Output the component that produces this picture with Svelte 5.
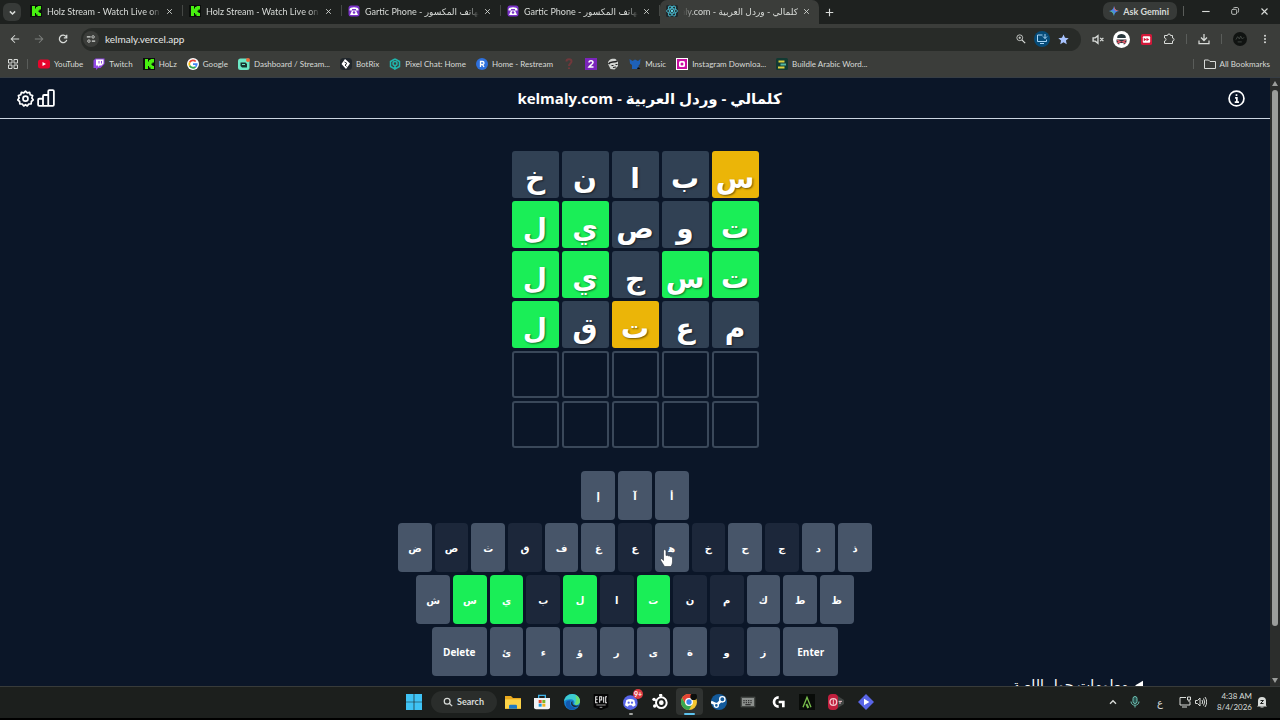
<script lang="ts">
	const tabs = [
		{ title: 'Holz Stream - Watch Live on Ki', icon: 'kick' },
		{ title: 'Holz Stream - Watch Live on Ki', icon: 'kick' },
		{ title: 'Gartic Phone - لعبة الهاتف المكسور', icon: 'gartic' },
		{ title: 'Gartic Phone - لعبة الهاتف المكسور', icon: 'gartic' },
		{ title: 'كلمالي - وردل العربية - kelmaly.com', icon: 'react', active: true }
	];

	const bookmarks = [
		{ label: 'YouTube', icon: 'youtube' },
		{ label: 'Twitch', icon: 'twitch' },
		{ label: 'HoLz', icon: 'kick' },
		{ label: 'Google', icon: 'google' },
		{ label: 'Dashboard / Stream...', icon: 'dashboard' },
		{ label: 'BotRix', icon: 'botrix' },
		{ label: 'Pixel Chat: Home', icon: 'pixel' },
		{ label: 'Home - Restream', icon: 'restream' },
		{ label: '', icon: 'question' },
		{ label: '', icon: 'two' },
		{ label: '', icon: 'face' },
		{ label: 'Music', icon: 'music' },
		{ label: 'Instagram Downloa...', icon: 'insta' },
		{ label: 'Buildle Arabic Word...', icon: 'buildle' }
	];

	// c = correct, p = present, a = absent, e = empty
	const guesses = [
		{ word: 'سبانخ', marks: 'paaaa' },
		{ word: 'توصيل', marks: 'caacc' },
		{ word: 'تسجيل', marks: 'ccacc' },
		{ word: 'معتقل', marks: 'aapac' },
		{ word: '     ', marks: 'eeeee' },
		{ word: '     ', marks: 'eeeee' }
	];

	const keyRows = [
		['إ', 'آ', 'أ'],
		['ض', 'ص', 'ث', 'ق', 'ف', 'غ', 'ع', 'ه', 'خ', 'ح', 'ج', 'د', 'ذ'],
		['ش', 'س', 'ي', 'ب', 'ل', 'ا', 'ت', 'ن', 'م', 'ك', 'ط', 'ظ'],
		['Delete', 'ئ', 'ء', 'ؤ', 'ر', 'ى', 'ة', 'و', 'ز', 'Enter']
	];
	const correct = 'سيلت';
	const absent = 'صقعخجبانمو';

	const apps = ['explorer', 'store', 'edge', 'epic', 'discord', 'steelseries', 'chrome', 'steam', 'keyboard', 'logitech', 'alpha', 'recorder', 'clip'];
</script>

{#snippet icon(name: string, size = 12)}
	<svg class="icon" width={size} height={size} viewBox="0 0 24 24" fill="none" stroke="currentColor" stroke-width="2" aria-hidden="true">
		{#if name === 'kick'}
			<rect width="24" height="24" fill="#0b0e0c" stroke="none" />
			<path d="M4 2h6v5h2V4h3V2h7v7h-3v2h-2v3h2v2h3v6h-7v-3h-3v-3h-2v6H4z" fill="#48f010" stroke="none" />
		{:else if name === 'gartic'}
			<rect x="1" y="1" width="22" height="22" rx="5" fill="#7a32c7" stroke="none" />
			<path d="M3 9c0-6 18-6 18 0v2h-5V8H8v3H3zM8 11h8l4 9H4z" fill="#fff" stroke="none" />
			<circle cx="12" cy="15" r="2.5" fill="#7a32c7" stroke="none" />
		{:else if name === 'react'}
			<rect width="24" height="24" rx="3" fill="#20292c" stroke="none" />
			<g stroke="#48b5c9" stroke-width="1.8">
				<ellipse cx="12" cy="12" rx="11" ry="4.5" />
				<ellipse cx="12" cy="12" rx="11" ry="4.5" transform="rotate(60 12 12)" />
				<ellipse cx="12" cy="12" rx="11" ry="4.5" transform="rotate(120 12 12)" />
			</g>
			<circle cx="12" cy="12" r="2.3" fill="#63dbec" stroke="none" />
		{:else if name === 'youtube'}
			<rect y="3" width="24" height="18" rx="5" fill="#e8052c" stroke="none" />
			<path d="m9 8 7 4-7 4z" fill="#fff" stroke="none" />
		{:else if name === 'twitch'}
			<path d="M5 1 1 5v15h5v4l4-4h5l8-8V1z" fill="#9147e5" stroke="none" />
			<path d="M6 3h15v8l-4 4h-4l-3 3v-3H6z" fill="#fff" stroke="none" />
			<path d="M12 6v5m5-5v5" stroke="#9147e5" />
		{:else if name === 'google'}
			<circle cx="12" cy="12" r="12" fill="#fff" stroke="none" />
			<g stroke-width="3.5">
				<path d="M17.5 7A7.5 7.5 0 0 0 5.4 8.5" stroke="#ea4335" />
				<path d="M5.4 8.5a7.5 7.5 0 0 0 0 7" stroke="#fbbc05" />
				<path d="M5.4 15.5A7.5 7.5 0 0 0 17 17.6" stroke="#34a853" />
				<path d="M17 17.6a7.5 7.5 0 0 0 2.5-5.4H12" stroke="#4285f4" />
			</g>
		{:else if name === 'dashboard'}
			<rect y="1" width="23" height="23" rx="5" fill="#6ce8c5" stroke="none" />
			<path d="M5 9h10l3 3v7H8l-3-3z" fill="#17342f" stroke="none" />
			<path d="M8 13h6" stroke="#6ce8c5" />
			<circle cx="20" cy="4" r="4" fill="#e46a3b" stroke="none" />
		{:else if name === 'botrix'}
			<rect width="24" height="24" rx="7" fill="#20262b" stroke="none" />
			<path d="m10 2 10 9-8 11L3 12z" fill="#fff" stroke="none" />
			<path d="m9 8 5 3-4 3 3 3" stroke="#20262b" />
		{:else if name === 'pixel'}
			<path d="m12 2 9 5v10l-9 5v-8M12 22l-9-5V7l9-5" stroke="#20b5ac" stroke-width="3" />
			<circle cx="12" cy="11" r="4" stroke="#20b5ac" stroke-width="3" />
		{:else if name === 'restream'}
			<circle cx="12" cy="12" r="12" fill="#2e70dc" stroke="none" />
			<path d="M9 18V7h4a3 3 0 0 1 0 6H9m4 0 3 5" stroke="#fff" stroke-width="2.6" />
		{:else if name === 'question'}
			<path d="M7 7c0-6 10-6 10 0 0 4-5 4-5 9m0 3v3" stroke="#70383b" stroke-width="4" />
		{:else if name === 'two'}
			<rect width="24" height="24" fill="#7b25bb" stroke="none" />
			<path d="M8 9c0-5 8-5 8 0 0 3-5 5-8 9h9" stroke="#fff" stroke-width="3" />
		{:else if name === 'face'}
			<path d="M2 12C1 4 9 0 17 2l5 5v9l-7 7-8-1z" fill="#d0d3d0" stroke="none" />
			<path d="M3 12c4-6 10-2 18-6" stroke="#222" stroke-width="3" />
			<path d="M9 15h4m4-2h4M12 19l6-1" stroke="#222" />
		{:else if name === 'music'}
			<path d="m1 2 6 4 5-3 6 3 5-4-1 10-3 3 1 7H6V14l-4-3z" fill="#1e61b8" stroke="none" />
			<path d="m18 18 5 4h-7z" fill="#080b10" stroke="none" />
		{:else if name === 'insta'}
			<rect x="1" y="1" width="22" height="22" fill="#c910a3" stroke="#fff" />
			<rect x="6" y="6" width="12" height="12" rx="3" fill="#fff" stroke="none" />
			<circle cx="12" cy="12" r="3" fill="#c910a3" stroke="none" />
		{:else if name === 'buildle'}
			<rect width="24" height="24" rx="3" fill="#123a32" stroke="none" />
			<path d="M5 5h12v4H5z" fill="#ddd23e" stroke="none" />
			<path d="M9 11h11v4H9z" fill="#53b8a2" stroke="none" />
			<path d="M4 17h13v4H4z" fill="#ddd23e" stroke="none" />
		{:else if name === 'close'}
			<path d="m4 4 16 16M20 4 4 20" stroke-width="3" />
		{:else if name === 'plus'}
			<path d="M12 2v20M2 12h20" stroke-width="3" />
		{:else if name === 'down'}
			<path d="m5 9 7 7 7-7" stroke-width="4" />
		{:else if name === 'up'}
			<path d="m3 17 9-9 9 9" stroke-width="4" />
		{:else if name === 'minimize'}
			<path d="M3 12h20" stroke-width="3" />
		{:else if name === 'restore'}
			<rect x="4" y="8" width="12" height="12" rx="3" />
			<path d="M8 5c1-2 12-2 12 0 1 1 1 10-1 11" />
		{:else if name === 'gemini'}
			<path d="M12 0c1 7 5 11 12 12-7 1-11 5-12 12-1-7-5-11-12-12C7 11 11 7 12 0z" fill="#4d86e8" stroke="none" />
			<path d="M12 0c1 7 5 11 12 12H12z" fill="#ec6a62" stroke="none" />
			<path d="M0 12h12v12C11 17 7 13 0 12z" fill="#51b98a" stroke="none" />
			<circle cx="12" cy="12" r="4" fill="#4d86e8" stroke="none" />
		{:else if name === 'back'}
			<path d="M22 12H3m9-9-9 9 9 9" stroke-width="2.5" />
		{:else if name === 'forward'}
			<path d="M2 12h19m-9-9 9 9-9 9" stroke-width="2.5" />
		{:else if name === 'reload'}
			<path d="M20 7a9 9 0 1 0 1 7M21 2v7h-7" stroke-width="3" />
		{:else if name === 'tune'}
			<path d="M2 7h9M14 17h8" stroke-width="3" />
			<circle cx="17" cy="7" r="3" />
			<circle cx="7" cy="17" r="3" />
		{:else if name === 'zoom'}
			<circle cx="9" cy="9" r="7" />
			<path d="m14 14 8 8" stroke-width="3" />
			<path d="M6 9h6M9 6v6" />
		{:else if name === 'install'}
			<path d="M13 4H3v13h18v-4M8 21h8M18 2v9m-4-4 4 4 4-4" />
		{:else if name === 'star'}
			<path d="m12 1 3.3 7.3 8 .8-6 5.2 1.8 8L12 18l-7.1 4.3 1.8-8-6-5.2 8-.8z" fill="#a9c4ff" stroke="none" />
		{:else if name === 'mute'}
			<path d="M2 9v6h4l5 4V5L6 9zM15 9l6 6m0-6-6 6" stroke-width="2.5" />
		{:else if name === 'panda'}
			<circle cx="12" cy="12" r="12" fill="#fff" stroke="none" />
			<path d="M6 8c1-5 11-5 12 0v2H6zM5 12h14v4l-3 3H8l-3-3z" fill="#29383d" stroke="none" />
			<path d="m6 13 4 2-4 2m12-4-4 2 4 2" stroke="#df5969" />
			<path d="M9 17h6v3H9z" fill="#fff" stroke="none" />
		{:else if name === 'ff'}
			<rect width="24" height="24" rx="4" fill="#d31839" stroke="none" />
			<rect x="4" y="5" width="16" height="14" rx="2" fill="#fff" stroke="none" />
			<path d="m6 8 6 4-6 4zm6 0 6 4-6 4z" fill="#d31839" stroke="none" />
		{:else if name === 'puzzle'}
			<path d="M3 5h6a3 3 0 0 1 6 0h4v5a3 3 0 0 1 0 6v5H3v-5a3 3 0 0 0 0-6z" />
		{:else if name === 'download'}
			<path d="M12 2v13m-6-6 6 6 6-6M2 15v6h20v-6" stroke-width="2.5" />
		{:else if name === 'profile'}
			<circle cx="12" cy="12" r="12" fill="#101311" stroke="none" />
			<path d="m5 13 3-5 3 4 2-5 3 5 3-3M8 17h7" stroke="#454a46" stroke-width="1.5" />
		{:else if name === 'dots'}
			<g fill="currentColor" stroke="none"><circle cx="12" cy="4" r="2.4" /><circle cx="12" cy="12" r="2.4" /><circle cx="12" cy="20" r="2.4" /></g>
		{:else if name === 'apps'}
			<path d="M3 3h7v7H3zM14 3h7v7h-7zM3 14h7v7H3zM14 14h7v7h-7z" />
		{:else if name === 'folder'}
			<path d="M1 4h8l3 3h11v14H1z" />
		{:else if name === 'gear'}
			<path d="M9.6 4 12 1.5 14.4 4 17.8 3.3 18.7 6.6 22 7.8 21 11.2 23 14 20.3 16.2 20 19.6 16.6 19.8 14.5 22.5 12 20.8 9.5 22.5 7.4 19.8 4 19.6 3.7 16.2 1 14 3 11.2 2 7.8 5.3 6.6 6.2 3.3z" stroke-width="2.4" stroke-linejoin="round" />
			<circle cx="12" cy="12.2" r="3.5" stroke-width="2.4" />
		{:else if name === 'stats'}
			<path d="M1.5 14.5q0-1.5 1.5-1.5h5v9.5H3q-1.5 0-1.5-1.5zM8 9.5Q8 8 9.500 8H15v14.500H8zM15 3q0-1.5 1.5-1.5H21q1.5 0 1.5 1.5v18q0 1.5-1.5 1.5h-6z" stroke-width="2.4" />
		{:else if name === 'info'}
			<circle cx="12" cy="12" r="10.5" stroke-width="2.4" />
			<path d="M10 11h2.5v6M9.5 17h6M12 6v2.5" stroke-width="2.4" />
		{:else if name === 'windows'}
			<path d="M0 0h11.5v11.5H0zM12.5 0H24v11.500H12.500zM0 12.500h11.500V24H0zM12.500 12.500H24V24H12.500z" fill="#3fc3f5" stroke="none" />
		{:else if name === 'search'}
			<circle cx="10" cy="10" r="7" stroke-width="3" />
			<path d="m15 15 7 7" stroke-width="3" />
		{:else if name === 'explorer'}
			<path d="M0 3h9l3 3h12v16H0z" fill="#e9a91e" stroke="none" />
			<path d="M0 8h24v14H0z" fill="#fbd348" stroke="none" />
			<path d="M6 22v-4q0-2 2-2h8q2 0 2 2v4z" fill="#1d7ac5" stroke="none" />
		{:else if name === 'store'}
			<path d="M7 6V2h10v4" stroke="#3fb3e9" />
			<path d="M0 6h24v14q0 3-3 3H3q-3 0-3-3z" fill="#f2f3f5" stroke="none" />
			<path d="M7 9h4.500v4.500H7z" fill="#e74b2c" stroke="none" />
			<path d="M12.500 9H17v4.500h-4.500z" fill="#79b52a" stroke="none" />
			<path d="M7 14.500h4.500V19H7z" fill="#1b9be0" stroke="none" />
			<path d="M12.500 14.500H17V19h-4.500z" fill="#f1b51d" stroke="none" />
		{:else if name === 'edge'}
			<circle cx="12" cy="12" r="12" fill="#1680d1" stroke="none" />
			<path d="M0 11C2-3 22-4 24 10c0 6-5 8-9 5 2-4-1-8-6-7-4 0-7 1-9 3z" fill="#3ccbd0" stroke="none" />
			<path d="M17 2c5 2 7 5 7 9 0 4-4 6-8 5 3-5 3-9 1-14z" fill="#6bdc70" stroke="none" />
			<path d="M10 10c-3 5 1 11 10 10-7 7-19 3-17-7 1-3 4-4 7-3z" fill="#1259ae" stroke="none" />
			<path d="M13 11c-2 5 3 8 9 6 0 3-9 4-11-1-1-3 0-5 2-5z" fill="#1c2a35" stroke="none" />
		{:else if name === 'epic'}
			<path d="M1 0h22v20l-11 4-11-4z" fill="#050505" stroke="none" />
			<path d="M7 4H4v9h3M4 8h3m3 5V4h3v5h-3m6-5v9m5-9h-2v9h2" stroke="#e8e8e8" stroke-width="1.6" />
			<path d="M5 16.5h14m-9 3.500h4" stroke="#a7a7a7" stroke-width="1.4" />
		{:else if name === 'discord'}
			<circle cx="11" cy="13" r="11" fill="#5865e8" stroke="none" />
			<path d="M5 9q6-3 12 0l2 8-4 2-2-2H9l-2 2-4-2z" fill="#fff" stroke="none" />
			<g fill="#5865e8" stroke="none"><circle cx="8.5" cy="13" r="1.7" /><circle cx="13.5" cy="13" r="1.7" /></g>
		{:else if name === 'steelseries'}
			<circle cx="14" cy="13" r="8" stroke="#fff" stroke-width="3" />
			<circle cx="14" cy="13" r="2.5" fill="#fff" stroke="#fff" />
			<g fill="#fff" stroke="none"><circle cx="3" cy="8" r="2.5" /><circle cx="13" cy="2" r="2.5" /><circle cx="4" cy="18" r="2.5" /></g>
			<path d="m3 8 4 3M4 18l4-2M13 2v4" stroke="#fff" />
		{:else if name === 'chrome'}
			<circle cx="12" cy="12" r="12" fill="#f5c62f" stroke="none" />
			<path d="M1.600 6A12 12 0 0 1 22.400 6H12z" fill="#e44336" stroke="none" />
			<path d="M1.600 6A12 12 0 0 0 12 24l5-9H7z" fill="#39a852" stroke="none" />
			<path d="M2 6 7 15l5-9z" fill="#e44336" stroke="none" />
			<circle cx="12" cy="12" r="5" fill="#3b83ec" stroke="#fff" />
			<circle cx="19" cy="4" r="5" fill="#0c0f0d" stroke="none" />
		{:else if name === 'steam'}
			<circle cx="12" cy="12" r="12" fill="#135a9b" stroke="none" />
			<path d="M0 12 9 16l8-8" stroke="#fff" stroke-width="4" />
			<circle cx="17" cy="8" r="4" fill="#135a9b" stroke="#fff" />
			<circle cx="8" cy="17" r="3" fill="#135a9b" stroke="#fff" />
		{:else if name === 'keyboard'}
			<rect x="2" y="5" width="20" height="14" fill="#8d918e" stroke="#454946" />
			<path d="M5 10h14M5 13h14" stroke="#333" stroke-dasharray="2 1.5" />
			<path d="M8 16h8" stroke="#333" />
		{:else if name === 'logitech'}
			<path d="M13 5a7 7 0 1 0 0 14M13 12h7v8" stroke="#fff" stroke-width="4" />
		{:else if name === 'alpha'}
			<rect width="24" height="24" fill="#080b08" stroke="none" />
			<path d="m6 20 6-15 6 15" stroke="#78bd4c" />
			<path d="m11 15 3 6" stroke="#78bd4c" stroke-width="3" />
		{:else if name === 'recorder'}
			<path d="m10 0 14 9v6l-14 9z" fill="#414543" stroke="none" />
			<rect width="15" height="24" rx="6" fill="#c21f3e" stroke="none" />
			<circle cx="8" cy="12" r="5" stroke="#f2c8ce" />
			<path d="M8 8v8M16 11h5m-3 0v4" stroke="#f2c8ce" stroke-width="1.5" />
		{:else if name === 'clip'}
			<path d="m12 0 12 12-12 12L0 12z" fill="#5965e7" stroke="none" />
			<path d="m9 7 8 5-8 5z" fill="#fff" stroke="none" />
		{:else if name === 'mic'}
			<rect x="8" y="1" width="8" height="14" rx="4" fill="#29534f" />
			<path d="M4 11c0 10 16 10 16 0M12 19v4" />
		{:else if name === 'network'}
			<path d="M14 3H2v15h20V11M6 22h10M17 2h6v6h-6zM20 8v4" />
		{:else if name === 'speaker'}
			<path d="M1 9v6h4l5 5V4L5 9zM14 8q3 4 0 8M17 5q5 7 0 14M20 2q7 10 0 20" />
		{:else if name === 'bell'}
			<path d="M4 19V10a8 8 0 0 1 16 0v9l2 2H2z" fill="currentColor" stroke="none" />
			<path d="M9 22h6" />
			<path d="M9 9h6l-6 6h6" stroke="#1c1f1d" />
		{/if}
	</svg>
{/snippet}

<div class="desktop">
	<div class="tab-strip">
		<button class="tab-search" aria-label="Search tabs">{@render icon('down', 9)}</button>
		{#each tabs as tab}
			<div class="tab" class:active={tab.active}>
				{@render icon(tab.icon, 12)}
				<span class="tab-title" dir={tab.active ? 'rtl' : 'ltr'}>{tab.title}</span>
				<button class="plain" aria-label="Close tab">{@render icon('close', 7)}</button>
			</div>
		{/each}
		<button class="plain new-tab" aria-label="New tab">{@render icon('plus', 9)}</button>
		<div class="window-controls">
			<button class="gemini">{@render icon('gemini', 10)}Ask Gemini</button>
			<span class="divider"></span>
			<button class="plain" aria-label="Minimize">{@render icon('minimize', 9)}</button>
			<button class="plain" aria-label="Restore">{@render icon('restore', 10)}</button>
			<button class="plain" aria-label="Close">{@render icon('close', 9)}</button>
		</div>
	</div>

	<div class="toolbar">
		<div class="nav">
			<button class="plain" aria-label="Back">{@render icon('back', 10)}</button>
			<button class="plain dim" aria-label="Forward">{@render icon('forward', 10)}</button>
			<button class="plain" aria-label="Reload">{@render icon('reload', 10)}</button>
		</div>
		<div class="address">
			<button class="site-info" aria-label="Site information">{@render icon('tune', 10)}</button>
			<input aria-label="Address" value="kelmaly.vercel.app" />
			<button class="plain" aria-label="Zoom">{@render icon('zoom', 10)}</button>
			<button class="install" aria-label="Install app">{@render icon('install', 12)}</button>
			<button class="plain" aria-label="Bookmark">{@render icon('star', 11)}</button>
		</div>
		<div class="extensions">
			<button class="mute" aria-label="Mute">{@render icon('mute', 13)}</button>
			<button class="plain" aria-label="Extension">{@render icon('panda', 17)}</button>
			<button class="plain" aria-label="Fast forward">{@render icon('ff', 11)}</button>
			<button class="plain" aria-label="Extensions">{@render icon('puzzle', 12)}</button>
			<span class="divider"></span>
			<button class="plain" aria-label="Downloads">{@render icon('download', 12)}</button>
			<span class="divider"></span>
			<button class="profile" aria-label="Profile">{@render icon('profile', 14)}</button>
			<button class="plain" aria-label="Menu">{@render icon('dots', 10)}</button>
		</div>
	</div>

	<nav class="bookmarks">
		<button class="plain" aria-label="Apps">{@render icon('apps', 12)}</button>
		<span class="divider"></span>
		{#each bookmarks as mark}
			<a href="#top" aria-label={mark.label || mark.icon}>{@render icon(mark.icon, 12)}{#if mark.label}<span>{mark.label}</span>{/if}</a>
		{/each}
		<span class="divider push"></span>
		<a href="#all">{@render icon('folder', 12)}<span>All Bookmarks</span></a>
	</nav>

	<div class="viewport">
		<main class="page">
			<header class="game-header">
				<button class="plain" aria-label="Settings">{@render icon('gear', 17)}</button>
				<button class="plain" aria-label="Statistics">{@render icon('stats', 18)}</button>
				<h1 dir="rtl">كلمالي - وردل العربية - kelmaly.com</h1>
				<button class="plain" aria-label="Info">{@render icon('info', 17)}</button>
			</header>

			<div class="board" dir="rtl">
				{#each guesses as guess}
					{#each guess.word.split('') as letter, i}
						<div class="tile {guess.marks[i]}">{letter.trim()}</div>
					{/each}
				{/each}
			</div>

			<div class="keyboard">
				{#each keyRows as row}
					<div class="key-row">
						{#each row as key}
							<button class="key" class:wide={key.length > 1} class:correct={correct.includes(key)} class:absent={absent.includes(key)}>
								{#if key === 'ه'}
									<!-- the joiner gives heh its initial form -->
									ه&zwj;
									<svg class="pointer" width="13" height="18" viewBox="0 0 13 18" aria-hidden="true">
										<path d="M3.5 10V2q0-1.5 1.2-1.5T6 2v4.500q2-.8 2.300.5 2-.6 2.300.7 1.900-.5 1.900 1.300v4q0 2-1.500 4.500H4.500L.8 11.500q-.8-1.500.5-1.800.9 0 2.200 1.800z" fill="#fff" stroke="#28303c" stroke-width=".6" />
									</svg>
								{:else}
									{key}
								{/if}
							</button>
						{/each}
					</div>
				{/each}
			</div>

			<details dir="rtl">
				<summary>معلومات حول اللعبة</summary>
			</details>
		</main>
		<div class="scrollbar">
			<span class="arrow"></span>
			<span class="thumb"></span>
			<span class="arrow flip"></span>
		</div>
	</div>

	<footer class="taskbar">
		<div class="dock">
			<button class="plain" aria-label="Start">{@render icon('windows', 16)}</button>
			<button class="search">{@render icon('search', 10)}Search</button>
			<div class="apps">
				{#each apps as app}
					<button class="app" class:current={app === 'chrome'} class:running={app === 'discord'} aria-label={app}>
						{@render icon(app, 16)}
						{#if app === 'discord'}<span class="badge">9+</span>{/if}
					</button>
				{/each}
			</div>
		</div>
		<div class="tray">
			<button class="plain" aria-label="Hidden icons">{@render icon('up', 8)}</button>
			<button class="mic" aria-label="Microphone">{@render icon('mic', 12)}</button>
			<button class="lang">ع</button>
			<button class="sound" aria-label="Network and volume">{@render icon('network', 12)}{@render icon('speaker', 12)}</button>
			<div class="clock"><span>4:38 AM</span><span>8/4/2026</span></div>
			<button class="plain" aria-label="Notifications">{@render icon('bell', 12)}</button>
		</div>
	</footer>
</div>

<style>
	:global(body) {
		background: #000;
	}

	.desktop {
		display: flex;
		flex-direction: column;
		height: 100vh;
		box-sizing: border-box;
		padding-bottom: 2px;
		overflow: hidden;
		color: #d8dbd8;
		font-family: Lato, 'DejaVu Sans', sans-serif;
		font-size: 9px;
	}

	button,
	input {
		margin: 0;
		padding: 0;
		border: 0;
		background: none;
		color: inherit;
		font: inherit;
	}

	button {
		display: flex;
		align-items: center;
		justify-content: center;
	}

	.icon {
		display: block;
		flex: none;
	}

	.divider {
		width: 1px;
		height: 10px;
		background: #5a5d5a;
	}

	.tab-strip {
		display: flex;
		flex: none;
		align-items: center;
		height: 24px;
		background: #1e211f;
	}

	.tab-search {
		width: 18px;
		height: 18px;
		margin: 0 3px;
		border-radius: 6px;
		background: #373a38;
	}

	.tab {
		display: flex;
		align-items: center;
		gap: 5px;
		box-sizing: border-box;
		width: 159px;
		height: 24px;
		padding: 0 9px 2px 6px;
		border-right: 1px solid transparent;
		border-image: linear-gradient(transparent 25%, #454845 25%, #454845 65%, transparent 65%) 1;
	}

	.tab.active {
		border: 0;
		border-radius: 7px 7px 0 0;
		background: #3b3d3a;
	}

	.tab-title {
		flex: 1;
		overflow: hidden;
		white-space: nowrap;
		mask-image: linear-gradient(to right, #000 90%, transparent);
	}

	.tab.active .tab-title {
		mask-image: linear-gradient(to left, #000 90%, transparent);
	}

	.new-tab {
		margin-left: 6px;
	}

	.window-controls {
		display: flex;
		align-items: center;
		gap: 20px;
		margin-left: auto;
		padding: 0 11px 2px 0;
	}

	.window-controls .divider {
		margin-right: -3px;
	}

	.gemini {
		gap: 4px;
		height: 18px;
		margin-right: -14px;
		padding: 0 8px 0 6px;
		border-radius: 7px;
		background: #373a38;
		font-weight: 700;
	}

	.toolbar {
		display: flex;
		flex: none;
		align-items: center;
		height: 30px;
		background: #3b3d3a;
	}

	.nav {
		display: flex;
		gap: 14px;
		padding: 0 13px 0 10px;
	}

	.dim {
		color: #7e817e;
	}

	.address {
		display: flex;
		flex: 1;
		align-items: center;
		gap: 10px;
		height: 23px;
		padding: 0 12px 0 2px;
		border-radius: 12px;
		background: #282b28;
	}

	.address input {
		flex: 1;
		min-width: 0;
		margin-left: -4px;
		outline: 0;
		color: #e6e8e6;
		font-size: 10px;
	}

	.site-info,
	.install {
		width: 16px;
		height: 16px;
		border-radius: 50%;
		background: #3b3d3a;
	}

	.install {
		margin: 0 -2px;
		background: #064b78;
		color: #a8d5f5;
	}

	.extensions {
		display: flex;
		align-items: center;
		gap: 11px;
		padding: 0 10px 0 11px;
	}

	.mute {
		margin-right: -3px;
	}

	.profile {
		margin-right: 2px;
	}

	.bookmarks {
		display: flex;
		flex: none;
		align-items: center;
		gap: 10px;
		box-sizing: border-box;
		height: 24px;
		padding: 0 10px 3px 7px;
		border-bottom: 1px solid #363d44;
		background: #3b3d3a;
		font-size: 8px;
	}

	.bookmarks > .plain {
		margin-right: -2px;
	}

	.bookmarks a {
		display: flex;
		align-items: center;
		gap: 4px;
		color: inherit;
		text-decoration: none;
		white-space: nowrap;
	}

	.push {
		margin-left: auto;
	}

	.viewport {
		display: flex;
		flex: 1;
		min-height: 0;
	}

	.page {
		flex: 1;
		overflow: hidden;
		background: #0b1628;
		color: #fff;
	}

	.game-header {
		display: flex;
		align-items: center;
		gap: 3px;
		height: 40px;
		padding: 0 25px 0 17px;
		border-bottom: 1px solid #cbd5e1;
	}

	h1 {
		flex: 1;
		margin: 0;
		padding-left: 16px;
		font-family: 'Open Sans', 'DejaVu Sans', sans-serif;
		font-size: 15px;
		font-weight: 700;
		text-align: center;
	}

	.board {
		display: grid;
		grid-template-columns: repeat(5, 47px);
		gap: 3px;
		justify-content: center;
		padding: 32px 0 23px;
	}

	.tile {
		display: flex;
		align-items: center;
		justify-content: center;
		box-sizing: border-box;
		height: 47px;
		padding-top: 6px;
		border-radius: 3px;
		background: #314154;
		font-size: 28px;
		font-weight: 700;
		line-height: 41px;
		text-shadow: 1px 1px 2px #0008;
	}

	.c,
	.key.correct {
		background: #1aee57;
	}

	.p {
		background: #ebb508;
	}

	.e {
		border: 2px solid #3a485a;
		background: none;
	}

	.keyboard {
		display: flex;
		flex-direction: column;
		gap: 3px;
		width: 474px;
		max-width: 100%;
		margin: 0 auto;
	}

	.key-row {
		display: flex;
		justify-content: center;
		gap: 3px;
	}

	.key {
		position: relative;
		flex: 0 0 calc((100% - 36px) / 13);
		height: 49px;
		border-radius: 4px;
		background: #475569;
		font-family: 'Open Sans', 'DejaVu Sans', sans-serif;
		font-size: 10px;
		font-weight: 700;
	}

	.key.wide {
		flex-basis: 55px;
	}

	.key.absent {
		background: #1c273a;
	}

	.pointer {
		position: absolute;
		top: 26px;
		left: 5px;
	}

	details {
		padding: 0 10%;
		font-size: 14px;
		line-height: 18px;
	}

	.scrollbar {
		display: flex;
		flex-direction: column;
		align-items: center;
		gap: 4px;
		width: 10px;
		padding: 3px 0;
		box-sizing: border-box;
		background: #2b2d2c;
	}

	.arrow {
		border: 3px solid transparent;
		border-top: 0;
		border-bottom: 5px solid #9b9d9b;
	}

	.flip {
		margin-top: auto;
		transform: rotate(180deg);
	}

	.thumb {
		width: 6px;
		height: 89%;
		border-radius: 3px;
		background: #9b9d9b;
	}

	.taskbar {
		display: grid;
		grid-template-columns: 1fr auto 1fr;
		flex: none;
		align-items: center;
		height: 29px;
		padding-bottom: 2px;
		border-top: 1px solid #383b3a;
		background: #1c1f1d;
	}

	.dock {
		display: flex;
		grid-column: 2;
		align-items: center;
		padding-left: 5px;
	}

	.search {
		gap: 4px;
		width: 66px;
		height: 22px;
		margin: 0 3px 0 9px;
		border-radius: 11px;
		background: #2a2d2b;
		font-weight: 700;
	}

	.apps {
		display: flex;
		justify-content: space-between;
		width: 380px;
	}

	.app {
		position: relative;
		width: 27px;
		height: 27px;
		border-radius: 4px;
	}

	.current {
		background: #303331;
	}

	.current::after,
	.running::after {
		content: '';
		position: absolute;
		bottom: 0;
		width: 4px;
		height: 2px;
		border-radius: 1px;
		background: #a0a3a0;
	}

	.current::after {
		width: 11px;
		background: #5dc2ee;
	}

	.badge {
		position: absolute;
		top: 1px;
		right: 1px;
		width: 10px;
		height: 10px;
		border-radius: 5px;
		background: #de3b45;
		color: #fff;
		font-size: 7px;
		font-weight: 700;
		line-height: 10px;
	}

	.tray {
		display: flex;
		align-items: center;
		justify-content: flex-end;
		gap: 12px;
		padding-right: 12px;
	}

	.mic {
		color: #6dc1b4;
	}

	.lang {
		margin: 0 4px;
		font-size: 10px;
	}

	.sound {
		gap: 4px;
	}

	.clock {
		display: flex;
		flex-direction: column;
		margin-right: -8px;
		margin-left: -2px;
		font-size: 8px;
		line-height: 11px;
		text-align: right;
	}
</style>
